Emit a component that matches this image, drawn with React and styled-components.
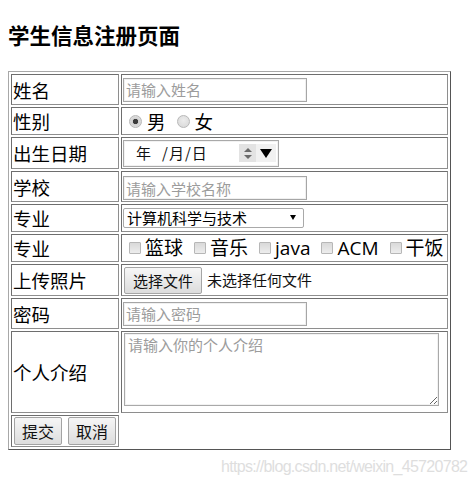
import React from 'react';
import styled, { createGlobalStyle } from 'styled-components';

const CJK = `"Noto Sans CJK SC", "Noto Sans", sans-serif`;
const MIXED = `"Open Sans", "Noto Sans CJK SC", sans-serif`;

const GlobalStyle = createGlobalStyle`
  html, body { margin: 0; padding: 0; background: #ffffff; }
  body { font-family: ${CJK}; color: #000; }
  *, *::before, *::after { box-sizing: border-box; }
`;

const Page = styled.div`
  position: relative;
  width: 474px;
  height: 485px;
  padding: 21px 8px 0;
  overflow: hidden;
`;

const Title = styled.h3`
  margin: 0 0 22px;
  font-size: 21.5px;
  line-height: 28px;
  font-weight: 700;
  color: #000;
`;

const FormTable = styled.div`
  display: grid;
  grid-template-columns: 108px 327px;
  gap: 2px;
  width: 443px;
  padding: 2px;
  border: 1px solid;
  border-color: #a8a8a8 #555555 #555555 #a8a8a8;
`;

const Cell = styled.div`
  height: ${(p) => p.$h}px;
  padding: 1px;
  border: 1px solid;
  border-color: #6e6e6e #8e8e8e #8e8e8e #6e6e6e;
  display: flex;
  align-items: ${(p) => p.$align || 'center'};
  font-size: 18.5px;
  line-height: 24px;
  white-space: nowrap;
  color: #000;
`;

const LabelCell = styled(Cell)``;

const FieldCell = styled(Cell)``;

const HobbyCell = styled(Cell)`
  font-family: ${MIXED};
  font-size: 19px;
`;

const TextInput = styled.input`
  width: 184px;
  height: 24px;
  margin: 0;
  padding: 1px 2px;
  font: 15px ${CJK};
  border: 1px solid #a6a6a6;
  box-shadow: inset 0 0 0 1px #f0f0f0;
  outline: none;
  background: #fff;
  &::placeholder {
    color: #9c9c9c;
  }
`;

const Choice = styled.label`
  display: inline-flex;
  align-items: center;
  margin-right: ${(p) => (p.$gap != null ? p.$gap : 5)}px;
`;

const Radio = styled.input.attrs({ type: 'radio' })`
  appearance: none;
  margin: 0 5px 0 6px;
  width: 13px;
  height: 13px;
  border-radius: 50%;
  border: 1px solid #b8b8b8;
  background: radial-gradient(circle at 50% 40%, #ececec 0, #d6d6d6 100%);
  &:checked {
    background: radial-gradient(circle, #3d3d3d 0 2.3px, #d2d2d2 3px, #e6e6e6 100%);
  }
`;

const CheckBox = styled.input.attrs({ type: 'checkbox' })`
  appearance: none;
  margin: 0 4px 0 6px;
  width: 12px;
  height: 12px;
  border: 1px solid #b7b7b7;
  border-radius: 1px;
  background: linear-gradient(#d9d9d9, #ededed);
`;

const DateBox = styled.div`
  width: 156px;
  height: 27px;
  border: 1px solid #a9a9a9;
  box-shadow: inset 0 0 0 1px #f2f2f2;
  display: flex;
  align-items: center;
  padding: 0 2px 0 12px;
  font-size: 15px;
  line-height: 20px;
  color: #111;
`;

const DatePart = styled.span`
  display: inline-block;
  min-width: ${(p) => p.$w || 0}px;
`;

const DateSep = styled.span`
  display: inline-block;
  margin: 0 1px;
`;

const Spinner = styled.span`
  margin-left: auto;
  width: 17px;
  height: 18px;
  background: #e3e3e3;
  display: flex;
  flex-direction: column;
  align-items: center;
  justify-content: center;
  gap: 3px;
`;

const DropBox = styled.span`
  width: 20px;
  height: 18px;
  background: #f1f1f1;
  display: flex;
  align-items: center;
  justify-content: center;
`;

const SelectWrap = styled.span`
  position: relative;
  display: inline-flex;
`;

const Select = styled.select`
  appearance: none;
  width: 181px;
  height: 20px;
  margin: 0;
  padding: 0 16px 0 3px;
  font: 15px ${CJK};
  line-height: 18px;
  border: 1px solid #a9a9a9;
  border-radius: 2px;
  background: #fff;
  color: #000;
  outline: none;
`;

const SelectArrow = styled.svg`
  position: absolute;
  right: 8px;
  top: 7px;
  pointer-events: none;
`;

const FileButton = styled.button`
  height: 27px;
  margin: 0 0 0 1px;
  padding: 0 8px;
  font: 15px ${CJK};
  color: #111;
  border: 1px solid #a5a5a5;
  border-radius: 2px;
  background: linear-gradient(#f7f7f7, #dcdcdc);
`;

const FileNote = styled.span`
  margin-left: 5px;
  font-size: 15px;
  color: #111;
`;

const Intro = styled.textarea`
  width: 315px;
  height: 73px;
  margin: 0 0 0 1px;
  padding: 1px 3px;
  font: 15px/20px ${CJK};
  border: 1px solid #a9a9a9;
  box-shadow: inset 0 0 0 1px #f2f2f2;
  outline: none;
  resize: both;
  &::placeholder {
    color: #9c9c9c;
  }
`;

const ActionButton = styled.button`
  height: 28px;
  margin: 0 0 0 1px;
  padding: 0 7px;
  font: 16px ${CJK};
  color: #111;
  border: 1px solid #a3a3a3;
  border-radius: 2px;
  background: linear-gradient(#f6f6f6, #dddddd);
  & + & {
    margin-left: 6px;
  }
`;

const Watermark = styled.div`
  position: absolute;
  left: 221px;
  top: 457px;
  font: 16px/20px "Liberation Sans", Arial, sans-serif;
  letter-spacing: -0.7px;
  color: #dedede;
  white-space: nowrap;
  pointer-events: none;
`;

const Tri = ({ dir = 'down', w, h, color }) => (
  <svg width={w} height={h} viewBox={`0 0 ${w} ${h}`}>
    {dir === 'up' ? (
      <polygon points={`0,${h} ${w},${h} ${w / 2},0`} fill={color} />
    ) : (
      <polygon points={`0,0 ${w},0 ${w / 2},${h}`} fill={color} />
    )}
  </svg>
);

const hobbies = [
  { label: '篮球', gap: 5 },
  { label: '音乐', gap: 5 },
  { label: 'java', gap: 5 },
  { label: 'ACM', gap: 5 },
  { label: '干饭', gap: 0 },
];

export default function App() {
  return (
    <>
      <GlobalStyle />
      <Page>
        <Title>学生信息注册页面</Title>
        <FormTable>
          <LabelCell $h={31}>姓名</LabelCell>
          <FieldCell $h={31}>
            <TextInput placeholder="请输入姓名" />
          </FieldCell>

          <LabelCell $h={28}>性别</LabelCell>
          <FieldCell $h={28}>
            <Choice>
              <Radio name="sex" defaultChecked />男
            </Choice>
            <Choice>
              <Radio name="sex" />女
            </Choice>
          </FieldCell>

          <LabelCell $h={32}>出生日期</LabelCell>
          <FieldCell $h={32}>
            <DateBox>
              <DatePart $w={25}>年</DatePart>
              <DateSep>/</DateSep>
              <DatePart>月</DatePart>
              <DateSep>/</DateSep>
              <DatePart>日</DatePart>
              <Spinner>
                <Tri dir="up" w={8} h={4} color="#6a6a6a" />
                <Tri dir="down" w={8} h={4} color="#6a6a6a" />
              </Spinner>
              <DropBox>
                <Tri dir="down" w={12} h={9} color="#000" />
              </DropBox>
            </DateBox>
          </FieldCell>

          <LabelCell $h={31}>学校</LabelCell>
          <FieldCell $h={31} $align="flex-end">
            <TextInput placeholder="请输入学校名称" />
          </FieldCell>

          <LabelCell $h={28}>专业</LabelCell>
          <FieldCell $h={28}>
            <SelectWrap>
              <Select defaultValue="cs">
                <option value="cs">计算机科学与技术</option>
                <option value="se">软件工程</option>
              </Select>
              <SelectArrow width="6" height="5" viewBox="0 0 6 5">
                <polygon points="0,0 6,0 3,5" fill="#000" />
              </SelectArrow>
            </SelectWrap>
          </FieldCell>

          <LabelCell $h={28}>专业</LabelCell>
          <HobbyCell $h={28}>
            {hobbies.map((h) => (
              <Choice key={h.label} $gap={h.gap}>
                <CheckBox />
                {h.label}
              </Choice>
            ))}
          </HobbyCell>

          <LabelCell $h={32}>上传照片</LabelCell>
          <FieldCell $h={32}>
            <FileButton type="button">选择文件</FileButton>
            <FileNote>未选择任何文件</FileNote>
          </FieldCell>

          <LabelCell $h={31}>密码</LabelCell>
          <FieldCell $h={31}>
            <TextInput type="password" placeholder="请输入密码" />
          </FieldCell>

          <LabelCell $h={82}>个人介绍</LabelCell>
          <FieldCell $h={82} $align="flex-start">
            <Intro placeholder="请输入你的个人介绍" />
          </FieldCell>

          <LabelCell $h={32}>
            <ActionButton type="submit">提交</ActionButton>
            <ActionButton type="reset">取消</ActionButton>
          </LabelCell>
        </FormTable>
        <Watermark>https://blog.csdn.net/weixin_45720782</Watermark>
      </Page>
    </>
  );
}
